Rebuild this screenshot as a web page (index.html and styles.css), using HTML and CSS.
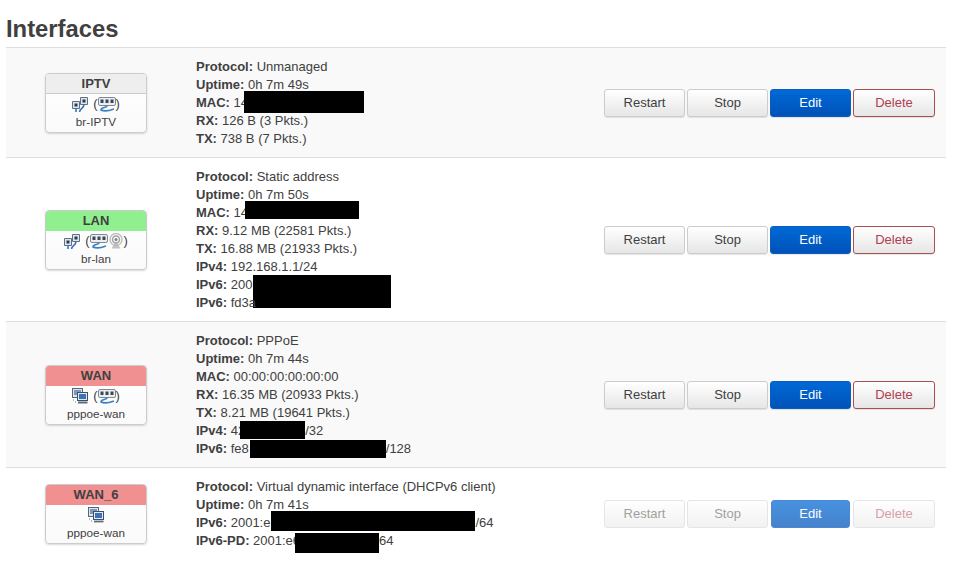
FILE: index.html
```html
<!DOCTYPE html>
<html lang="en">
<head>
  <meta charset="UTF-8">
  <title>Interfaces</title>
  <link rel="stylesheet" href="styles.css">
</head>
<body>
  <svg class="defs" width="0" height="0">
    <symbol id="ic-eth" viewBox="0 0 16 16">
      <path d="M.5 5.5h7v7h-7z" fill="#dfe5ec" stroke="#5d7086"/>
      <path d="M8.5 1.5h7v7h-7z" fill="#dfe5ec" stroke="#5d7086"/>
      <path d="M2.5 7.5h3v3h-3zM10.500 3.5h3v3h-3z" fill="#2f3843"/>
      <path d="M4 12.500V16M12 8.500c0 4-3.500 3-4.500 7.500" fill="none" stroke="#3a72ba" stroke-width="1.6"/>
    </symbol>
    <symbol id="ic-switch" viewBox="0 0 18 16">
      <rect x=".5" y="1.5" width="17" height="8" rx="1.5" fill="#eceef1" stroke="#7d8894"/>
      <path d="M2.5 3.5h3v3.500h-3zM7.500 3.500h3v3.500h-3zM12.500 3.500h3v3.500h-3z" fill="#3d4753"/>
      <path d="M9 9.5c0 3-6 1-6 4.500 3 1.500 9 .5 13-1" fill="none" stroke="#3a7fc4" stroke-width="1.6"/>
    </symbol>
    <symbol id="ic-wifi" viewBox="0 0 16 16">
      <circle cx="8" cy="6.5" r="6" fill="none" stroke="#c4c4c4" stroke-width="1.6"/>
      <circle cx="8" cy="6.5" r="3.5" fill="none" stroke="#a2a2a2" stroke-width="1.5"/>
      <circle cx="8" cy="6.5" r="1.5" fill="#808080"/>
      <path d="M8 8l-4.500 7.500h9z" fill="#b4b4b4" fill-opacity=".8"/>
    </symbol>
    <symbol id="ic-pc" viewBox="0 0 16 16">
      <rect x=".5" y=".5" width="10" height="9" fill="#dfe5ec" stroke="#54667a"/>
      <rect x="2" y="2" width="7" height="5" fill="#7d97b5"/>
      <rect x="5.5" y="4.5" width="10" height="8" fill="#e4e9ef" stroke="#3d5066"/>
      <rect x="7" y="6" width="7" height="5" fill="#3a74b6"/>
      <path d="M6 14.500h9.500" stroke="#5d6b7a" stroke-width="1.8"/>
      <path d="M1 12h1M3 14h1" stroke="#6c7a88"/>
    </symbol>
  </svg>

  <h2>Interfaces</h2>

  <div class="rows">
    <div class="row odd">
      <div class="status">
        <div class="badge">
          <div class="badge-name">IPTV</div>
          <div class="badge-body">
            <div class="icons">
              <svg class="ic"><use href="#ic-eth"/></svg>
              <span class="paren">(<svg class="ic sw"><use href="#ic-switch"/></svg>)</span>
            </div>
            <div class="dev">br-IPTV</div>
          </div>
        </div>
      </div>
      <div class="stats">
        <div><b>Protocol:</b> Unmanaged</div>
        <div><b>Uptime:</b> 0h 7m 49s</div>
        <div><b>MAC:</b> 14<span class="black r1-mac"></span></div>
        <div><b>RX:</b> 126 B (3 Pkts.)</div>
        <div><b>TX:</b> 738 B (7 Pkts.)</div>
      </div>
      <div class="actions">
        <button class="btn">Restart</button>
        <button class="btn">Stop</button>
        <button class="btn edit">Edit</button>
        <button class="btn del">Delete</button>
      </div>
    </div>

    <div class="row">
      <div class="status">
        <div class="badge">
          <div class="badge-name lan">LAN</div>
          <div class="badge-body">
            <div class="icons">
              <svg class="ic"><use href="#ic-eth"/></svg>
              <span class="paren">(<svg class="ic sw"><use href="#ic-switch"/></svg><svg class="ic"><use href="#ic-wifi"/></svg>)</span>
            </div>
            <div class="dev">br-lan</div>
          </div>
        </div>
      </div>
      <div class="stats">
        <div><b>Protocol:</b> Static address</div>
        <div><b>Uptime:</b> 0h 7m 50s</div>
        <div><b>MAC:</b> 14<span class="black r2-mac"></span></div>
        <div><b>RX:</b> 9.12 MB (22581 Pkts.)</div>
        <div><b>TX:</b> 16.88 MB (21933 Pkts.)</div>
        <div><b>IPv4:</b> 192.168.1.1/24</div>
        <div><b>IPv6:</b> 200<span class="black r2-v6"></span></div>
        <div><b>IPv6:</b> fd3a</div>
      </div>
      <div class="actions">
        <button class="btn">Restart</button>
        <button class="btn">Stop</button>
        <button class="btn edit">Edit</button>
        <button class="btn del">Delete</button>
      </div>
    </div>

    <div class="row odd">
      <div class="status">
        <div class="badge">
          <div class="badge-name wan">WAN</div>
          <div class="badge-body">
            <div class="icons">
              <svg class="ic"><use href="#ic-pc"/></svg>
              <span class="paren">(<svg class="ic sw"><use href="#ic-switch"/></svg>)</span>
            </div>
            <div class="dev">pppoe-wan</div>
          </div>
        </div>
      </div>
      <div class="stats">
        <div><b>Protocol:</b> PPPoE</div>
        <div><b>Uptime:</b> 0h 7m 44s</div>
        <div><b>MAC:</b> 00:00:00:00:00:00</div>
        <div><b>RX:</b> 16.35 MB (20933 Pkts.)</div>
        <div><b>TX:</b> 8.21 MB (19641 Pkts.)</div>
        <div><b>IPv4:</b> 42<span class="black r3-v4"></span>/32</div>
        <div><b>IPv6:</b> fe8<span class="black r3-v6"></span>/128</div>
      </div>
      <div class="actions">
        <button class="btn">Restart</button>
        <button class="btn">Stop</button>
        <button class="btn edit">Edit</button>
        <button class="btn del">Delete</button>
      </div>
    </div>

    <div class="row">
      <div class="status">
        <div class="badge">
          <div class="badge-name wan">WAN_6</div>
          <div class="badge-body">
            <div class="icons">
              <svg class="ic"><use href="#ic-pc"/></svg>
            </div>
            <div class="dev">pppoe-wan</div>
          </div>
        </div>
      </div>
      <div class="stats">
        <div><b>Protocol:</b> Virtual dynamic interface (DHCPv6 client)</div>
        <div><b>Uptime:</b> 0h 7m 41s</div>
        <div><b>IPv6:</b> 2001:e<span class="black r4-v6"></span>/64</div>
        <div><b>IPv6-PD:</b> 2001:e6<span class="black r4-pd"></span>64</div>
      </div>
      <div class="actions off">
        <button class="btn" disabled>Restart</button>
        <button class="btn" disabled>Stop</button>
        <button class="btn edit" disabled>Edit</button>
        <button class="btn del" disabled>Delete</button>
      </div>
    </div>
  </div>
</body>
</html>
```

FILE: styles.css
```css
body {
  margin: 0;
  padding: 0 15px 0 6px;
  font-family: "Liberation Sans", Arial, sans-serif;
  font-size: 13px;
  color: #404040;
  background: #fff;
}
.defs {
  position: absolute;
}
h2 {
  margin: 0;
  padding-top: 14px;
  height: 33px;
  font-size: 23.8px;
  line-height: 30px;
  color: #404040;
}
.rows {
  border-top: 1px solid #ddd;
}
.row {
  display: flex;
  align-items: center;
  padding: 10px 11px 9px 0;
  border-bottom: 1px solid #ddd;
}
.row:last-child {
  border-bottom: none;
}
.odd {
  background: #f9f9f9;
}
.status {
  width: 180px;
  display: flex;
  justify-content: center;
}
.badge {
  width: 100px;
  border: 1px solid #ccc;
  border-radius: 4px;
  box-shadow: 0 1px 2px rgba(0, 0, 0, .15);
  background: linear-gradient(#fff, #fafafa);
  text-align: center;
  overflow: hidden;
}
.badge-name {
  height: 19px;
  line-height: 19px;
  font-weight: bold;
  background: #eee;
  border-bottom: 1px solid #ccc;
}
.lan {
  background: #90f090;
  border-bottom-color: #90f090;
}
.wan {
  background: #f09090;
  border-bottom-color: #f09090;
}
.badge-body {
  padding: 2px 0;
  font-size: 11.7px;
  line-height: 16px;
}
.dev {
  margin-top: 2px;
}
.icons {
  display: flex;
  justify-content: center;
  align-items: center;
  gap: 5px;
  height: 16px;
  font-size: 13px;
}
.paren {
  display: flex;
  align-items: center;
}
.ic {
  width: 16px;
  height: 16px;
}
.sw {
  width: 18px;
}
.stats {
  flex: 1;
  padding-left: 10px;
  font-size: 13px;
  line-height: 18px;
}
/* redaction boxes: zero-height margin box so they don't push the lines */
.black {
  display: inline-block;
  background: #000;
  vertical-align: top;
}
.r1-mac {
  width: 120px;
  height: 22px;
  margin: -3px 0 -19px -4px;
}
.r2-mac {
  width: 114px;
  height: 18px;
  margin: -3px 0 -15px -3px;
}
.r2-v6 {
  width: 138px;
  height: 33px;
  margin: -1px 0 -32px 1px;
}
.r3-v4 {
  width: 65px;
  height: 18px;
  margin: -1px 0 -17px -5px;
}
.r3-v6 {
  width: 136px;
  height: 18px;
  margin: 0 0 -18px 1px;
}
.r4-v6 {
  width: 204px;
  height: 20px;
  margin: -3px 0 -17px 1px;
}
.r4-pd {
  width: 84px;
  height: 20px;
  margin: 1px 0 -21px -5px;
}
.actions {
  display: flex;
  gap: 2px;
}
.btn {
  width: 81px;
  height: 28px;
  padding: 0 0 2px;
  font-family: inherit;
  font-size: 13px;
  color: #404040;
  background: linear-gradient(#fff, #e6e6e6);
  border: 1px solid #ccc;
  border-radius: 3px;
  box-shadow: 0 1px 1px rgba(0, 0, 0, .1);
}
.edit {
  color: #fff;
  background: linear-gradient(#0069d6, #0052b8);
  border-color: #0a5cc0;
}
.del {
  color: #b04050;
  border-color: #a85050;
  width: 82px;
}
.off .btn {
  opacity: .5;
  box-shadow: none;
}
.off .edit {
  opacity: .72;
  width: 79px;
  margin: 0 1px;
}
.off .del {
  border-color: #ccc;
}
```
